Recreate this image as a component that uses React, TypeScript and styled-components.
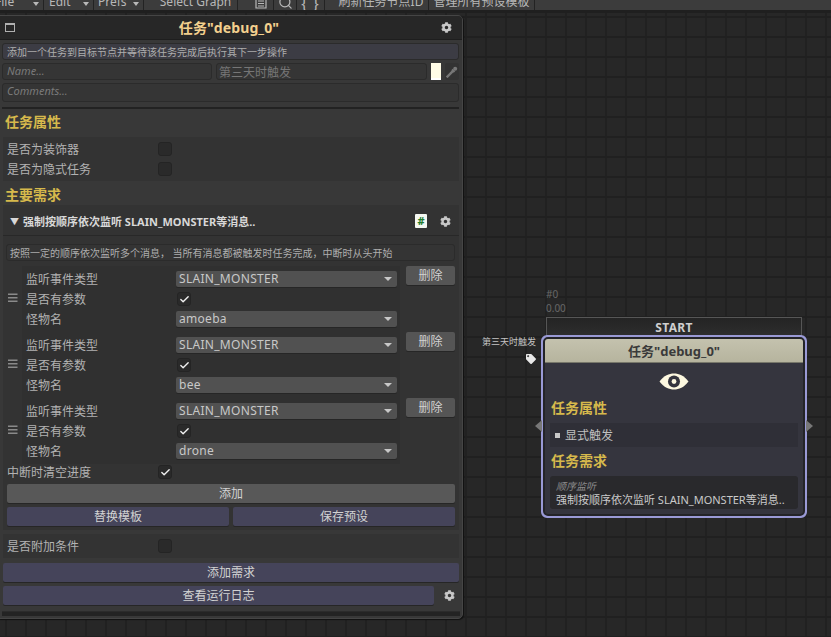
import React from "react";
import styled, { createGlobalStyle } from "styled-components";
import { FaCog, FaTag } from "react-icons/fa";
import { Check, Search } from "lucide-react";

const GlobalStyle = createGlobalStyle`
  html, body {
    margin: 0;
    padding: 0;
    background: #262626;
  }
  * {
    box-sizing: border-box;
  }
`;

const FONT = `"Noto Sans", "Noto Sans CJK SC", sans-serif`;

const Page = styled.div`
  width: 831px;
  height: 637px;
  overflow: hidden;
  display: flex;
  flex-direction: column;
  font-family: ${FONT};
  font-size: 12px;
  color: #c4c4c4;
`;

/* top toolbar, its text is cut by the window edge */
const Toolbar = styled.div`
  height: 10px;
  flex: none;
  display: flex;
  background: #3c3c3c;
  overflow: hidden;
`;

const ToolItem = styled.div<{ $w: number; $gap?: number }>`
  width: ${(p) => p.$w}px;
  margin-left: ${(p) => p.$gap ?? 0}px;
  flex: none;
  height: 10px;
  display: flex;
  align-items: center;
  justify-content: center;
  border-right: 1px solid #232323;
  color: #b8b8b8;
  white-space: nowrap;
  span {
    line-height: 16px;
    margin-top: -6px;
  }
  svg {
    margin-top: -5px;
    flex: none;
  }
`;

const MenuItem = styled(ToolItem)<{ $left: number }>`
  justify-content: space-between;
  padding-right: 4px;
  span {
    margin-left: ${(p) => p.$left}px;
  }
`;

const ToolArrow = styled.i`
  width: 0;
  height: 0;
  margin-top: -2px;
  border-left: 3px solid transparent;
  border-right: 3px solid transparent;
  border-top: 4px solid #b8b8b8;
`;

const Braces = styled.span`
  font-size: 15px;
  letter-spacing: 1px;
`;

const Canvas = styled.div`
  position: relative;
  flex: 1;
  background-color: #272727;
  background-image:
    linear-gradient(#202020 2px, transparent 2px),
    linear-gradient(90deg, #212121 2px, transparent 2px);
  background-size: 20px 20px;
  background-position: 5px 3px;
  border-top: 3px solid #1f1f1f;
`;

/* floating inspector window */
const Panel = styled.div`
  position: absolute;
  left: -1px;
  top: 2px;
  width: 464px;
  height: 604px;
  background: #383838;
  border: 1px solid #454545;
  border-radius: 0 5px 5px 0;
  box-shadow: 1px 1px 1px #111;
  display: flex;
  flex-direction: column;
  overflow: hidden;
`;

const TitleBar = styled.div`
  flex: none;
  height: 24px;
  display: grid;
  grid-template-columns: 32px 1fr 32px;
  align-items: center;
  background: #272727;
  border-bottom: 1px solid #1e1e1e;
`;

const WindowIcon = styled.i`
  width: 10px;
  height: 9px;
  margin-left: 5px;
  border: 1px solid #b0b0b0;
  border-top-width: 2px;
`;

const PanelTitle = styled.div`
  text-align: center;
  font-size: 14px;
  font-weight: 700;
  line-height: 20px;
  color: #f3d08e;
  letter-spacing: 0.1px;
  margin-left: -4px;
`;

const GearSlot = styled.div`
  display: flex;
  align-items: center;
  justify-content: center;
  color: #c8c8c8;
  font-size: 11px;
`;

const Body = styled.div`
  flex: 1;
  display: flex;
  flex-direction: column;
  padding: 0 3px 0 2px;
`;

const Field = styled.div<{ $bg?: string }>`
  height: 17px;
  margin-top: 3px;
  padding: 1px 4px 0;
  flex: none;
  background: ${(p) => p.$bg ?? "#353535"};
  border: 1px solid #2b2b2b;
  border-radius: 3px;
  font-size: 10px;
  line-height: 15px;
  color: #aeaeae;
  white-space: nowrap;
  overflow: hidden;
`;

const NameRow = styled.div`
  display: grid;
  grid-template-columns: 210px 211px 10px 14px;
  column-gap: 4px;
  margin-top: 3px;
  height: 17px;
  align-items: stretch;
`;

const Placeholder = styled(Field)`
  margin-top: 0;
  padding-top: 0;
  font-size: 11px;
  font-style: italic;
  line-height: 14px;
  color: #7a7a7a;
  height: auto;
`;

const CommentField = styled(Placeholder)`
  margin-top: 3px;
  height: 19px;
`;

const Trigger = styled(Field)`
  margin-top: 0;
  font-size: 12px;
  line-height: 15px;
  color: #767676;
  height: auto;
  padding: 1px 2px 0;
`;

const Swatch = styled.div`
  background: #fffce6;
  border-bottom: 2px solid #ffffff;
`;

const Dropper = styled.div`
  display: flex;
  align-items: center;
  justify-content: center;
  background: #333333;
  border-radius: 2px;
`;

const Divider = styled.div`
  flex: none;
  height: 2px;
  margin-top: 5px;
  background: #222222;
`;

const SectionTitle = styled.div<{ $top: number }>`
  flex: none;
  height: 18px;
  margin-top: ${(p) => p.$top}px;
  padding-left: 3px;
  font-size: 14px;
  font-weight: 700;
  line-height: 18px;
  color: #d6b94c;
`;

const Group = styled.div<{ $top: number; $pad?: string }>`
  flex: none;
  margin: ${(p) => p.$top}px 0 0 1px;
  padding: ${(p) => p.$pad ?? "0"};
  background: #333333;
  display: flex;
  flex-direction: column;
`;

const CheckRow = styled.div<{ $h?: number }>`
  height: ${(p) => p.$h ?? 20}px;
  display: flex;
  align-items: center;
  padding-left: 4px;
`;

const RowLabel = styled.div<{ $w?: number }>`
  width: ${(p) => p.$w ?? 151}px;
  flex: none;
  padding-top: 1px;
  font-size: 12px;
  line-height: 16px;
  color: #b2b2b2;
  white-space: nowrap;
`;

const Box = styled.div`
  width: 14px;
  height: 14px;
  flex: none;
  display: flex;
  align-items: center;
  justify-content: center;
  background: #2a2a2a;
  border: 1px solid #242424;
  border-radius: 3px;
  color: #f0f0f0;
`;

const ReqHeader = styled.div`
  height: 31px;
  flex: none;
  display: flex;
  align-items: center;
  padding: 2px 0 0 7px;
  border-bottom: 1px solid #282828;
  font-size: 11px;
  font-weight: 700;
  color: #d8d8d8;
  white-space: nowrap;
`;

const Fold = styled.span`
  font-size: 9px;
  width: 13px;
  flex: none;
`;

const ReqTitle = styled.span`
  flex: 1;
`;

const HashDoc = styled.div`
  width: 12px;
  height: 14px;
  flex: none;
  background: #f4f8f2;
  color: #1f7a2c;
  font-size: 11px;
  font-weight: 700;
  line-height: 14px;
  text-align: center;
  border-radius: 1px;
`;

const ReqGear = styled(GearSlot)`
  width: 32px;
  padding-left: 4px;
  flex: none;
`;

const ReqDescription = styled(Field)`
  margin: 8px 4px 5px 3px;
  padding-left: 3px;
  background: #343434;
`;

const Item = styled.div`
  display: grid;
  grid-template-columns: 16px 384px 49px;
  margin: 0 4px 0 3px;
  height: 66px;
`;

const Handle = styled.div`
  display: flex;
  align-items: center;
  justify-content: center;
  padding: 0 3px 2px 0;
`;

const ItemRows = styled.div`
  padding: 3px 0 3px 4px;
  margin-right: 6px;
  background: #303030;
  display: flex;
  flex-direction: column;
`;

const FieldRow = styled.div`
  height: 20px;
  display: flex;
  align-items: center;
`;

const SelectBox = styled.div`
  width: 221px;
  height: 16px;
  flex: none;
  display: flex;
  align-items: center;
  justify-content: space-between;
  padding: 0 4px 1px 3px;
  background: #515151;
  border-radius: 2px;
  box-shadow: 0 1px 0 #262626;
  font-size: 12px;
  letter-spacing: 0.3px;
  color: #c8c8c8;
`;

const SelectArrow = styled.i`
  width: 0;
  height: 0;
  margin-right: 1px;
  margin-top: 1px;
  border-left: 4px solid transparent;
  border-right: 4px solid transparent;
  border-top: 4px solid #c8c8c8;
`;

const Offset = styled.div`
  margin-left: 1px;
`;

const Button = styled.div<{ $tone?: "grey" | "purple" }>`
  height: 19px;
  padding-bottom: 2px;
  display: flex;
  align-items: center;
  justify-content: center;
  background: ${(p) => (p.$tone === "purple" ? "#45445a" : "#585858")};
  border-radius: 2px;
  box-shadow: 0 1px 0 #262626;
  font-size: 12px;
  color: #d2d2d2;
`;

const DeleteButton = styled(Button)`
  background: #555555;
`;

const ActionButton = styled(Button)`
  margin: 4px 4px 0 4px;
`;

const ButtonPair = styled.div`
  display: grid;
  grid-template-columns: 1fr 1fr;
  column-gap: 4px;
  margin: 4px;
`;

const WideButton = styled(Button)<{ $top: number }>`
  margin: ${(p) => p.$top}px 0 0 1px;
  flex: none;
`;

const LogRow = styled.div`
  display: grid;
  grid-template-columns: 431px 30px;
  margin: 4px 0 0 1px;
  align-items: center;
`;

const ScrollBar = styled.div`
  flex: none;
  height: 5px;
  margin-top: 6px;
  margin-right: -1px;
  background: #232323;
  border-top: 1px solid #2b2b2b;
`;

/* graph node, free on the canvas */
const Node = styled.div`
  position: absolute;
  left: 541px;
  top: 274px;
  width: 266px;
`;

const NodeMeta = styled.div`
  padding-left: 5px;
  font-size: 10px;
  line-height: 14px;
  color: #676767;
`;

const StartBar = styled.div`
  height: 19px;
  margin: 2px 5px 0 5px;
  display: flex;
  align-items: center;
  justify-content: center;
  background: linear-gradient(#242424, #2e2e2e);
  border: 1px solid #565656;
  border-bottom: 0;
  font-size: 12px;
  font-weight: 700;
  letter-spacing: 0.3px;
  color: #cfcfcf;
`;

const Card = styled.div`
  position: relative;
  margin-top: -1px;
  border: 2px solid #9a9ad6;
  border-radius: 6px;
  background: #9a9ad6;
`;

const CardInner = styled.div`
  border: 2px solid #242428;
  border-radius: 5px;
  background: #35353e;
  padding-bottom: 5px;
  overflow: hidden;
`;

const CardHeader = styled.div`
  height: 24px;
  display: flex;
  align-items: center;
  justify-content: center;
  background: linear-gradient(#c4c2ae, #b6b49e);
  border-bottom: 1px solid #77776a;
  font-size: 13px;
  font-weight: 700;
  color: #3a3a3a;
`;

const EyeSlot = styled.div`
  height: 36px;
  display: flex;
  align-items: center;
  justify-content: center;
`;

const CardSection = styled.div<{ $top?: number }>`
  height: 18px;
  margin-top: ${(p) => p.$top ?? 0}px;
  padding-left: 6px;
  font-size: 14px;
  font-weight: 700;
  line-height: 18px;
  color: #d6b94c;
`;

const CardRow = styled.div`
  height: 24px;
  margin: 6px 5px 0 5px;
  padding-left: 5px;
  display: flex;
  align-items: center;
  background: #2f2f37;
  color: #c0c0c0;
  font-size: 12px;
`;

const Bullet = styled.i`
  width: 5px;
  height: 5px;
  margin-right: 5px;
  background: #c8c8c8;
`;

const CardBox = styled.div`
  height: 33px;
  margin: 6px 5px 0 5px;
  padding: 4px 6px 0;
  background: #29292c;
  border-radius: 3px;
  display: flex;
  flex-direction: column;
  white-space: nowrap;
`;

const CardBoxTag = styled.div`
  font-size: 10px;
  font-style: italic;
  line-height: 13px;
  color: #8c8c8c;
`;

const CardBoxText = styled.div`
  font-size: 11px;
  line-height: 13px;
  color: #cacaca;
`;

const NodeLabel = styled.div`
  position: absolute;
  right: calc(100% + 5px);
  top: 48px;
  display: flex;
  flex-direction: column;
  align-items: flex-end;
  font-size: 9px;
  line-height: 14px;
  color: #c4c4c4;
  white-space: nowrap;
  svg {
    margin-top: 5px;
    color: #e8e8e8;
  }
`;

const Port = styled.i<{ $side: "left" | "right" }>`
  position: absolute;
  top: 83px;
  width: 0;
  height: 0;
  border-top: 6px solid transparent;
  border-bottom: 6px solid transparent;
  ${(p) =>
    p.$side === "left"
      ? "left: -8px; border-right: 7px solid #777777;"
      : "right: -8px; border-left: 7px solid #777777;"}
`;

const HandleIcon = () => (
  <svg width="10" height="10" viewBox="0 0 10 10">
    <path d="M0 0.5h9.5v1.6H0zM0 4h9.5v1.6H0zM0 7.5h9.5v1.6H0z" fill="#8a8a8a" />
  </svg>
);

const DocIcon = () => (
  <svg width="12" height="12" viewBox="0 0 12 12">
    <path d="M1 1h10v10H1z M3 4h6M3 6.5h6M3 9h6" fill="none" stroke="#b8b8b8" strokeWidth="1.2" />
  </svg>
);

const EyeIcon = () => (
  <svg width="30" height="17" viewBox="0 0 30 17">
    <path d="M0.5 8.5C5 2.5 10 0.5 15 0.5s10 2 14.5 8c-4.5 6-9.5 8-14.5 8s-10-2-14.5-8z" fill="#fdf8e0" />
    <circle cx="15" cy="8.5" r="6" fill="#35353e" />
    <circle cx="15" cy="8.5" r="2.4" fill="#fdf8e0" />
  </svg>
);

// the picker glyph: thick diagonal barrel with a round head
const DropperIcon = () => (
  <svg width="12" height="12" viewBox="0 0 12 12">
    <path d="M1.5 10.5L7 5" stroke="#777777" strokeWidth="2.4" strokeLinecap="square" />
    <path d="M6 3.5L8.5 6" stroke="#777777" strokeWidth="2" />
    <circle cx="9.2" cy="2.8" r="2" fill="#777777" />
  </svg>
);

const Tick = () => <Check size={11} strokeWidth={3} />;

const monsters = ["amoeba", "bee", "drone"];

const ListenItem = ({ monster }: { monster: string }) => (
  <Item>
    <Handle>
      <HandleIcon />
    </Handle>
    <ItemRows>
      <FieldRow>
        <RowLabel $w={150}>监听事件类型</RowLabel>
        <SelectBox>
          SLAIN_MONSTER
          <SelectArrow />
        </SelectBox>
      </FieldRow>
      <FieldRow>
        <RowLabel $w={150}>是否有参数</RowLabel>
        <Offset>
          <Box>
            <Tick />
          </Box>
        </Offset>
      </FieldRow>
      <FieldRow>
        <RowLabel $w={150}>怪物名</RowLabel>
        <SelectBox>
          {monster}
          <SelectArrow />
        </SelectBox>
      </FieldRow>
    </ItemRows>
    <DeleteButton>删除</DeleteButton>
  </Item>
);

export default function App() {
  return (
    <Page>
      <GlobalStyle />
      <Toolbar>
        <MenuItem $w={44} $left={-5}>
          <span>File</span>
          <ToolArrow />
        </MenuItem>
        <MenuItem $w={50} $left={5}>
          <span>Edit</span>
          <ToolArrow />
        </MenuItem>
        <MenuItem $w={50} $left={4}>
          <span>Prefs</span>
          <ToolArrow />
        </MenuItem>
        <ToolItem $w={84} $gap={10}>
          <span>Select Graph</span>
        </ToolItem>
        <ToolItem $w={26} $gap={10}>
          <DocIcon />
        </ToolItem>
        <ToolItem $w={23}>
          <Search size={15} color="#b8b8b8" />
        </ToolItem>
        <ToolItem $w={28}>
          <Braces>{"{ }"}</Braces>
        </ToolItem>
        <ToolItem $w={95} $gap={9}>
          <span>刷新任务节点ID</span>
        </ToolItem>
        <ToolItem $w={106}>
          <span>管理所有预设模板</span>
        </ToolItem>
      </Toolbar>
      <Canvas>
        <Panel>
          <TitleBar>
            <WindowIcon />
            <PanelTitle>任务"debug_0"</PanelTitle>
            <GearSlot>
              <FaCog />
            </GearSlot>
          </TitleBar>
          <Body>
            <Field $bg="#3c3c44">添加一个任务到目标节点并等待该任务完成后执行其下一步操作</Field>
            <NameRow>
              <Placeholder>Name...</Placeholder>
              <Trigger>第三天时触发</Trigger>
              <Swatch />
              <Dropper>
                <DropperIcon />
              </Dropper>
            </NameRow>
            <CommentField>Comments...</CommentField>
            <Divider />
            <SectionTitle $top={4}>任务属性</SectionTitle>
            <Group $top={6} $pad="2px 0">
              <CheckRow>
                <RowLabel>是否为装饰器</RowLabel>
                <Box />
              </CheckRow>
              <CheckRow>
                <RowLabel>是否为隐式任务</RowLabel>
                <Box />
              </CheckRow>
            </Group>
            <SectionTitle $top={5}>主要需求</SectionTitle>
            <Group $top={1}>
              <ReqHeader>
                <Fold>▼</Fold>
                <ReqTitle>强制按顺序依次监听 SLAIN_MONSTER等消息..</ReqTitle>
                <HashDoc>#</HashDoc>
                <ReqGear>
                  <FaCog />
                </ReqGear>
              </ReqHeader>
              <ReqDescription>
                按照一定的顺序依次监听多个消息， 当所有消息都被触发时任务完成，中断时从头开始
              </ReqDescription>
              {monsters.map((m) => (
                <ListenItem key={m} monster={m} />
              ))}
              <CheckRow $h={16}>
                <RowLabel>中断时清空进度</RowLabel>
                <Box>
                  <Tick />
                </Box>
              </CheckRow>
              <ActionButton>添加</ActionButton>
              <ButtonPair>
                <Button $tone="purple">替换模板</Button>
                <Button $tone="purple">保存预设</Button>
              </ButtonPair>
            </Group>
            <Group $top={4} $pad="2px 0">
              <CheckRow>
                <RowLabel>是否附加条件</RowLabel>
                <Box />
              </CheckRow>
            </Group>
            <WideButton $tone="purple" $top={5}>
              添加需求
            </WideButton>
            <LogRow>
              <Button $tone="purple">查看运行日志</Button>
              <GearSlot>
                <FaCog />
              </GearSlot>
            </LogRow>
            <ScrollBar />
          </Body>
        </Panel>

        <Node>
          <NodeMeta>#0</NodeMeta>
          <NodeMeta>0.00</NodeMeta>
          <StartBar>START</StartBar>
          <Card>
            <CardInner>
              <CardHeader>任务"debug_0"</CardHeader>
              <EyeSlot>
                <EyeIcon />
              </EyeSlot>
              <CardSection>任务属性</CardSection>
              <CardRow>
                <Bullet />
                显式触发
              </CardRow>
              <CardSection $top={5}>任务需求</CardSection>
              <CardBox>
                <CardBoxTag>顺序监听</CardBoxTag>
                <CardBoxText>强制按顺序依次监听 SLAIN_MONSTER等消息..</CardBoxText>
              </CardBox>
            </CardInner>
            <Port $side="left" />
            <Port $side="right" />
          </Card>
          <NodeLabel>
            第三天时触发
            <FaTag size={10} />
          </NodeLabel>
        </Node>
      </Canvas>
    </Page>
  );
}
